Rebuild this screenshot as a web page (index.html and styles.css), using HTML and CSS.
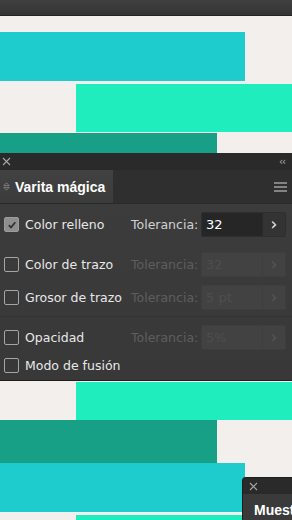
FILE: index.html
```html
<!DOCTYPE html>
<html lang="es">
<head>
  <meta charset="UTF-8">
  <meta name="viewport" content="width=device-width, initial-scale=1.0">
  <title>Varita mágica</title>
  <link rel="stylesheet" href="styles.css">
</head>
<body>
  <div class="topbar"></div>

  <div class="canvas canvas-top">
    <div class="band cyan"></div>
    <div class="band green"></div>
    <div class="band dark"></div>
  </div>

  <div class="panel">
    <div class="panel-strip">
      <svg class="close" width="9" height="9" viewBox="0 0 9 9"><path d="M1 1L8 8M8 1L1 8" stroke="#a8a8a8" stroke-width="1.1"/></svg>
      <span class="collapse">&lsaquo;&lsaquo;</span>
    </div>
    <div class="tabbar">
      <div class="tab">
        <svg class="updown" width="7" height="9" viewBox="0 0 7 9"><path d="M3.5 0.8L6.2 3.6H0.8Z M3.5 8.2L6.2 5.4H0.8Z" fill="none" stroke="#8a8a8a" stroke-width="0.8"/></svg>
        <span class="tab-title">Varita mágica</span>
      </div>
      <svg class="menu" width="13" height="10" viewBox="0 0 13 10"><path d="M0 1H13M0 5H13M0 9H13" stroke="#a0a0a0" stroke-width="1.5"/></svg>
    </div>

    <div class="panel-body">
      <div class="row row-first">
        <span class="check checked">
          <svg width="10" height="10" viewBox="0 0 10 10"><path d="M1.8 5.2L4 7.5L8.3 2.3" fill="none" stroke="#303030" stroke-width="1.8"/></svg>
        </span>
        <span class="label">Color relleno</span>
        <span class="tol">Tolerancia:</span>
        <span class="field"><span class="value">32</span><span class="arrow">&rsaquo;</span></span>
      </div>

      <div class="row row-gap">
        <span class="check"></span>
        <span class="label">Color de trazo</span>
        <span class="tol off">Tolerancia:</span>
        <span class="field off"><span class="value">32</span><span class="arrow">&rsaquo;</span></span>
      </div>

      <div class="row">
        <span class="check"></span>
        <span class="label">Grosor de trazo</span>
        <span class="tol off">Tolerancia:</span>
        <span class="field off"><span class="value">5 pt</span><span class="arrow">&rsaquo;</span></span>
      </div>

      <div class="divider"></div>

      <div class="row">
        <span class="check"></span>
        <span class="label">Opacidad</span>
        <span class="tol off">Tolerancia:</span>
        <span class="field off"><span class="value">5%</span><span class="arrow">&rsaquo;</span></span>
      </div>

      <div class="row row-last">
        <span class="check"></span>
        <span class="label">Modo de fusión</span>
      </div>
    </div>
  </div>

  <div class="canvas canvas-bottom">
    <div class="band green tall"></div>
    <div class="band dark deep"></div>
    <div class="band cyan"></div>
    <div class="band green stub"></div>
  </div>

  <div class="mini-panel">
    <div class="mini-strip">
      <svg width="9" height="9" viewBox="0 0 9 9"><path d="M1 1L8 8M8 1L1 8" stroke="#a8a8a8" stroke-width="1.1"/></svg>
    </div>
    <div class="mini-title">Muest</div>
  </div>
</body>
</html>
```

FILE: styles.css
```css
* {
  margin: 0;
  padding: 0;
  box-sizing: border-box;
}

body {
  width: 292px;
  height: 520px;
  overflow: hidden;
  position: relative;
  background-color: #f2efec;
  font-family: "DejaVu Sans", Verdana, sans-serif;
}

.topbar {
  height: 16px;
  background: linear-gradient(#404040, #333);
  border-bottom: 1px solid #222;
}

.canvas {
  display: flex;
  flex-direction: column;
}

.canvas-top {
  padding-top: 16px;
}

.band {
  height: 49px;
}

.cyan {
  width: 245px;
  background-color: #1ecbcd;
}

.green {
  margin-left: 76px;
  background-color: #20edbd;
}

.dark {
  width: 217px;
  background-color: #17a085;
}

.canvas-top .green {
  margin-top: 3px;
  height: 48px;
}

.canvas-top .dark {
  margin-top: 1px;
  height: 20px;
}

.canvas-bottom {
  padding-top: 1px;
}

.green.tall {
  height: 38px;
}

.dark.deep {
  height: 43px;
}

.green.stub {
  margin-top: 3px;
  height: 10px;
}

/* panel */
.panel {
  height: 228px;
  background: linear-gradient(#3d3d3d, #383838);
  border-bottom: 1px solid #1e1e1e;
}

.panel-strip {
  height: 17px;
  background-color: #2a2a2a;
  display: flex;
  align-items: center;
  justify-content: space-between;
  padding: 0 7px 0 2px;
}

.close {
  display: block;
}

.collapse {
  color: #b0b0b0;
  font-size: 10px;
  letter-spacing: -1px;
  line-height: 10px;
  margin-top: 1px;
}

.tabbar {
  height: 34px;
  background-color: #2f2f2f;
  display: flex;
  align-items: stretch;
  justify-content: space-between;
  border-bottom: 1px solid #2a2a2a;
}

.tab {
  width: 113px;
  background: linear-gradient(#424242, #3b3b3b);
  display: flex;
  align-items: center;
  padding-left: 3px;
  gap: 5px;
}

.tab-title {
  color: #fff;
  font-family: "Liberation Sans", Arial, sans-serif;
  font-weight: bold;
  font-size: 14px;
  white-space: nowrap;
}

.menu {
  align-self: center;
  margin-right: 5px;
}

.panel-body {
  padding: 8px 6px 0 4px;
}

.row {
  height: 25px;
  display: flex;
  align-items: center;
  margin-top: 8px;
}

.row-first {
  margin-top: 0;
}

.row-gap {
  margin-top: 15px;
}

.row-last {
  margin-top: 3px;
}

.check {
  width: 15px;
  height: 15px;
  border: 1.5px solid #a5a5a5;
  border-radius: 2px;
  display: flex;
  align-items: center;
  justify-content: center;
  flex-shrink: 0;
}

.check.checked {
  background-color: #8e8e8e;
  border-color: #9c9c9c;
}

.label {
  color: #e8e8e8;
  font-size: 12.5px;
  margin-left: 6px;
  width: 106px;
  white-space: nowrap;
}

.tol {
  color: #d2d2d2;
  font-size: 12.5px;
  width: 70px;
}

.tol.off {
  color: #5e5e5e;
}

.field {
  display: flex;
  height: 25px;
  width: 85px;
  border: 1px solid #2e2e2e;
  border-radius: 2px;
}

.value {
  flex: 1;
  background-color: #262626;
  color: #fff;
  font-size: 13px;
  display: flex;
  align-items: center;
  padding-left: 4px;
}

.arrow {
  width: 23px;
  background-color: #333;
  color: #e6e6e6;
  font-size: 17px;
  display: flex;
  align-items: center;
  justify-content: center;
  border-left: 1px solid #2a2a2a;
  padding-bottom: 2px;
}

.field.off {
  border-color: #3e3e3e;
}

.field.off .value {
  background-color: #424242;
  color: #4e4e4e;
}

.field.off .arrow {
  background-color: #424242;
  color: #555;
  border-left-color: #3e3e3e;
}

.divider {
  height: 1px;
  background-color: #333;
  margin: 6px -6px 0 -4px;
}

/* floating swatches panel */
.mini-panel {
  position: absolute;
  left: 242px;
  top: 477px;
  width: 50px;
  height: 43px;
  background-color: #3a3a3a;
  border: 1px solid #1e1e1e;
  border-right: none;
  border-bottom: none;
  border-radius: 4px 0 0 0;
  overflow: hidden;
}

.mini-strip {
  height: 16px;
  background-color: #2a2a2a;
  padding: 4px 0 0 6px;
}

.mini-strip svg {
  display: block;
}

.mini-title {
  color: #fff;
  font-family: "Liberation Sans", Arial, sans-serif;
  font-weight: bold;
  font-size: 14px;
  line-height: 16px;
  padding: 8px 0 0 11px;
  white-space: nowrap;
}
```
